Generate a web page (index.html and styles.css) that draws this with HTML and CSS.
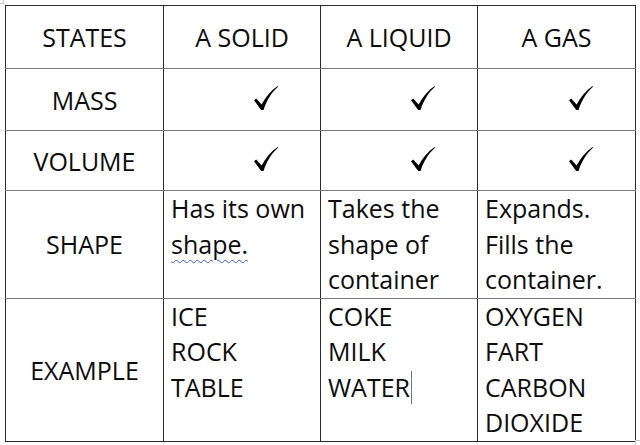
FILE: index.html
```html
<!DOCTYPE html>
<html>
<head>
<meta charset="utf-8">
<link rel="stylesheet" href="styles.css">
</head>
<body>
<span class="mark-tl"></span>
<div class="wrap">
<table class="states">
  <colgroup>
    <col class="c1"><col class="c2"><col class="c3"><col class="c4">
  </colgroup>
  <tr class="r-head">
    <td class="label">STATES</td>
    <td class="label">A SOLID</td>
    <td class="label">A LIQUID</td>
    <td class="label">A GAS</td>
  </tr>
  <tr class="r-mass">
    <td class="label">MASS</td>
    <td class="tick"><svg class="check" viewBox="0 0 24 24"><path d="M0 14.2 L2.2 12.6 L7.6 18.6 C11.5 11.2 16.8 4.6 23.6 0 L24 0.7 C17.8 6.2 12.6 13.8 9.6 24 L7.2 24 Z"/></svg></td>
    <td class="tick"><svg class="check" viewBox="0 0 24 24"><path d="M0 14.2 L2.2 12.6 L7.6 18.6 C11.5 11.2 16.8 4.6 23.6 0 L24 0.7 C17.8 6.2 12.6 13.8 9.6 24 L7.2 24 Z"/></svg></td>
    <td class="tick"><svg class="check" viewBox="0 0 24 24"><path d="M0 14.2 L2.2 12.6 L7.6 18.6 C11.5 11.2 16.8 4.6 23.6 0 L24 0.7 C17.8 6.2 12.6 13.8 9.6 24 L7.2 24 Z"/></svg></td>
  </tr>
  <tr class="r-vol">
    <td class="label">VOLUME</td>
    <td class="tick"><svg class="check" viewBox="0 0 24 24"><path d="M0 14.2 L2.2 12.6 L7.6 18.6 C11.5 11.2 16.8 4.6 23.6 0 L24 0.7 C17.8 6.2 12.6 13.8 9.6 24 L7.2 24 Z"/></svg></td>
    <td class="tick"><svg class="check" viewBox="0 0 24 24"><path d="M0 14.2 L2.2 12.6 L7.6 18.6 C11.5 11.2 16.8 4.6 23.6 0 L24 0.7 C17.8 6.2 12.6 13.8 9.6 24 L7.2 24 Z"/></svg></td>
    <td class="tick"><svg class="check" viewBox="0 0 24 24"><path d="M0 14.2 L2.2 12.6 L7.6 18.6 C11.5 11.2 16.8 4.6 23.6 0 L24 0.7 C17.8 6.2 12.6 13.8 9.6 24 L7.2 24 Z"/></svg></td>
  </tr>
  <tr class="r-shape">
    <td class="label">SHAPE</td>
    <td class="text">Has its own<br><span class="wavy">shape.</span></td>
    <td class="text">Takes the<br>shape of<br>container</td>
    <td class="text">Expands.<br>Fills the<br>container.</td>
  </tr>
  <tr class="r-ex">
    <td class="label">EXAMPLE</td>
    <td class="text">ICE<br>ROCK<br>TABLE</td>
    <td class="text">COKE<br>MILK<br>WATER<span class="caret"></span></td>
    <td class="text">OXYGEN<br>FART<br>CARBON<br>DIOXIDE</td>
  </tr>
</table>
<span class="mark-br"></span>
</div>
</body>
</html>
```
FILE: styles.css
```css
html, body {
  margin: 0;
  padding: 0;
  background: #ffffff;
}
body {
  width: 640px;
  height: 445px;
  overflow: hidden;
  position: relative;
  font-family: "Open Sans", "Lato", "Liberation Sans", sans-serif;
  color: #0c0c0c;
}
.wrap {
  padding: 5px 0 0 5px;
  position: relative;
}
.states {
  border-collapse: collapse;
  table-layout: fixed;
  width: 630px;
  font-size: 25px;
}
.c1 { width: 158px; }
.c2 { width: 157px; }
.c3 { width: 157px; }
.c4 { width: 158px; }
.states td {
  border-left: 1px solid #2a2a2a;
  border-right: 1px solid #2a2a2a;
  border-top: 1px solid #7a7a7a;
  border-bottom: 1px solid #7a7a7a;
  padding: 0;
}
.r-head td { border-top-color: #2a2a2a; }
.r-ex td { border-bottom-color: #2a2a2a; }
.r-head { height: 63px; }
.r-mass { height: 62px; }
.r-vol { height: 60px; }
.r-shape { height: 107px; }
.r-ex { height: 142px; }
.label {
  text-align: center;
  vertical-align: middle;
}
.tick {
  text-align: right;
  vertical-align: middle;
  padding-right: 42px !important;
}
.check {
  width: 24px;
  height: 24px;
  display: inline-block;
  vertical-align: middle;
  position: relative;
  top: -5px;
  fill: #000;
}
.text {
  vertical-align: top;
  text-align: left;
  padding: 0 2px 0 7px !important;
  line-height: 35.5px;
  white-space: nowrap;
}
.wavy {
  text-decoration-line: underline;
  text-decoration-style: wavy;
  text-decoration-color: #3f57d6;
  text-decoration-thickness: 1px;
  text-underline-offset: 5px;
}
.caret {
  display: inline-block;
  width: 1px;
  height: 33px;
  background: #777;
  vertical-align: -7px;
  margin-left: 1px;
}
.mark-tl {
  position: absolute;
  left: 0;
  top: 0;
  width: 3px;
  height: 3px;
  border-right: 1px solid #c8c8c8;
  border-bottom: 1px solid #c8c8c8;
}
.mark-br {
  position: absolute;
  left: 635px;
  top: 440px;
  width: 5px;
  height: 5px;
  border-left: 1px solid #c8c8c8;
  border-top: 1px solid #c8c8c8;
}
```
